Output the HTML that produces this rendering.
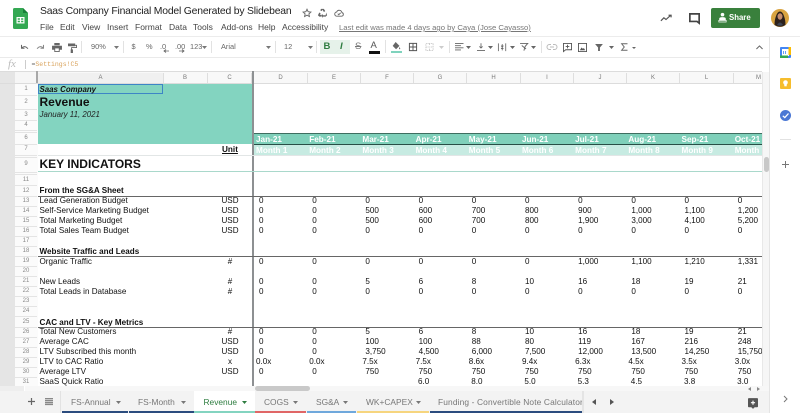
<!DOCTYPE html>
<html><head><meta charset="utf-8"><style>
html,body{margin:0;padding:0;background:#fff}
body{width:800px;height:413px;overflow:hidden;position:relative;font-family:"Liberation Sans",sans-serif;color:#111}
#p{position:absolute;left:0;top:0;width:800px;height:413px;overflow:hidden;filter:blur(.35px)}
.a{position:absolute;white-space:nowrap}
.b{position:absolute}
.rn{position:absolute;left:15px;width:22px;text-align:center;font-size:6px;color:#888;line-height:10px}
.rl{position:absolute;left:15px;width:22px;height:1px;background:#e4e4e4}
.ch{position:absolute;top:73px;height:10px;line-height:10px;text-align:center;font-size:6px;color:#777;border-right:1px solid #dedede}
.t{position:absolute;left:39.5px;font-size:8.1px;line-height:10px;margin-top:.4px;white-space:nowrap;color:#111}
.h{font-weight:bold;color:#111}
.u{position:absolute;left:208px;width:44px;text-align:center;font-size:8.1px;line-height:10px;margin-top:.4px;color:#111}
.v{position:absolute;left:259px;display:flex;font-size:8.1px;line-height:10px;margin-top:.4px;color:#111;white-space:nowrap}
.v span{display:block;width:53.2px;flex:none}
.hd{position:absolute;left:256px;display:flex;font-size:8.2px;font-weight:bold;color:#fff;line-height:11px;white-space:nowrap}
.hd span{display:block;width:53.2px;flex:none}
.menu{position:absolute;top:22px;font-size:8.5px;line-height:11px;color:#444}
.tool{position:absolute;top:42px;font-size:7.4px;line-height:10px;color:#666}
.tab{position:absolute;top:396px;font-size:8.4px;line-height:12px;color:#777;white-space:nowrap}
svg{position:absolute;overflow:visible}
</style></head><body><div id="p">

<!-- Title bar -->
<svg style="left:13px;top:8px" width="15" height="21" viewBox="0 0 15 21"><path d="M1.5 0H10L15 5V19.5Q15 21 13.5 21H1.5Q0 21 0 19.5V1.5Q0 0 1.5 0Z" fill="#34a853"/><path d="M10 0L15 5H10Z" fill="#188038"/><path d="M3.5 9H11.5V15.5H3.5ZM4.7 10.2V11.7H6.9V10.2ZM8.1 10.2V11.7H10.3V10.2ZM4.7 12.8V14.3H6.9V12.8ZM8.1 12.8V14.3H10.3V12.8Z" fill="#fff" fill-rule="evenodd"/></svg>
<div class="a" style="left:40px;top:4px;font-size:10.4px;letter-spacing:-.2px;line-height:16px;color:#222">Saas Company Financial Model Generated by Slidebean</div>
<svg style="left:301.5px;top:8px" width="10" height="10" viewBox="0 0 24 24"><path d="M12 3l2.800 6 6.500.7-4.800 4.400 1.300 6.400L12 17.300 6.200 20.500l1.300-6.400L2.700 9.700 9.200 9z" fill="none" stroke="#666" stroke-width="2.200"/></svg>
<svg style="left:317px;top:7px" width="11" height="11" viewBox="0 0 24 24"><path d="M9 4h6l3 5-3 2-3-5-2 3-3-2zM5 12l-3 6 3 3h5v-4H6l2-3zM20 12l2 6-3 3h-6v3l-3-5 3-4v3h6z" fill="#666"/></svg>
<svg style="left:334px;top:8.5px" width="10" height="8.5" viewBox="0 0 24 20"><path d="M7 17a5 5 0 0 1-.5-10A6.500 6.500 0 0 1 19 8.500 4.300 4.300 0 0 1 18.500 17zM9 11l2.500 2.500L16 9" fill="none" stroke="#666" stroke-width="2.200"/></svg>
<div class="menu" style="left:40px">File</div>
<div class="menu" style="left:60px">Edit</div>
<div class="menu" style="left:82px">View</div>
<div class="menu" style="left:107px">Insert</div>
<div class="menu" style="left:135px">Format</div>
<div class="menu" style="left:169px">Data</div>
<div class="menu" style="left:193px">Tools</div>
<div class="menu" style="left:221px">Add-ons</div>
<div class="menu" style="left:258px">Help</div>
<div class="menu" style="left:282px">Accessibility</div>
<div class="menu" style="left:339px;color:#777;text-decoration:underline;font-size:7.7px">Last edit was made 4 days ago by Caya (Jose Cayasso)</div>

<svg style="left:660px;top:14px" width="12" height="8.5" viewBox="0 0 14 10"><path d="M1 8L4.500 4.500 7 6.500 12 2M10 1.500H13V4" fill="none" stroke="#555" stroke-width="1.400"/></svg>
<svg style="left:688.5px;top:13px" width="11" height="11" viewBox="0 0 13 13"><path d="M1 1H12V12L9.500 10H1Z" fill="none" stroke="#444" stroke-width="2"/></svg>
<div class="b" style="left:711px;top:8px;width:49px;height:20px;background:#39803c;border-radius:2px"></div>
<svg style="left:718px;top:12px" width="9" height="11" viewBox="0 0 11 12"><circle cx="5.500" cy="2.500" r="2.200" fill="#fff"/><path d="M1.500 9V7.500Q1.500 5.500 5.500 5.500T9.500 7.500V9Z" fill="#fff"/><path d="M1 9.500H10V11.500H1Z" fill="none" stroke="#fff" stroke-width=".8"/></svg>
<div class="a" style="left:729px;top:12px;font-size:7.8px;line-height:12px;font-weight:bold;color:#fff">Share</div>
<svg style="left:771px;top:9px" width="18" height="18" viewBox="0 0 18 18"><circle cx="9" cy="9" r="9" fill="#d9a441"/><path d="M3.500 16Q3.500 11 5 7Q6.500 2.500 9 2.500T13 7Q14.500 11 14.500 16Q9 19.500 3.500 16Z" fill="#2c211c"/><ellipse cx="9" cy="7.500" rx="2.500" ry="3.200" fill="#c58d6e"/><path d="M6 16Q9 11 12 16Q9 17.500 6 16Z" fill="#3d4452"/></svg>

<div class="b" style="left:0;top:36px;width:800px;height:1px;background:#ececec"></div>

<!-- Toolbar -->
<svg style="left:20px;top:44px" width="9" height="6" viewBox="0 0 10 7"><path d="M1.500 1V5H5M1.800 4.800Q5 1 9 5.500" fill="none" stroke="#666" stroke-width="1.200"/></svg>
<svg style="left:36px;top:44px" width="9" height="6" viewBox="0 0 10 7"><path d="M8.500 1V5H5M8.200 4.800Q5 1 1 5.500" fill="none" stroke="#888" stroke-width="1.200"/></svg>
<svg style="left:51.5px;top:43px" width="10" height="9" viewBox="0 0 11 10"><path d="M2.500 0H8.500V2.500H2.500ZM0 3H11V7.500H8.500V10H2.500V7.500H0Z" fill="#666"/><path d="M3.500 6H7.500V9H3.500Z" fill="#fff"/></svg>
<svg style="left:68px;top:43px" width="9" height="10" viewBox="0 0 10 11"><path d="M0 .5H8V3.500H0ZM8 2H10V5.500H4.500V7H5.500V11H3V7H3.500V4.500H9V3H8Z" fill="#666"/></svg>
<div class="b" style="left:81px;top:41px;width:1px;height:12px;background:#e2e2e2"></div>
<div class="tool" style="left:91px">90%</div>
<svg style="left:114px;top:46px" width="5" height="3"><path d="M0 0H5L2.500 3Z" fill="#777"/></svg>
<div class="b" style="left:123px;top:41px;width:1px;height:12px;background:#e2e2e2"></div>
<div class="tool" style="left:131.5px">$</div>
<div class="tool" style="left:146px">%</div>
<div class="tool" style="left:160px">.0</div>
<svg style="left:163px;top:49px" width="6" height="4"><path d="M6 2H1M3 .5L1 2 3 3.500" fill="none" stroke="#666" stroke-width=".8"/></svg>
<div class="tool" style="left:175px">.00</div>
<svg style="left:179px;top:49px" width="6" height="4"><path d="M0 2H5M3 .5L5 2 3 3.500" fill="none" stroke="#666" stroke-width=".8"/></svg>
<div class="tool" style="left:190px">123</div>
<svg style="left:202px;top:46px" width="5" height="3"><path d="M0 0H5L2.500 3Z" fill="#777"/></svg>
<div class="b" style="left:211px;top:41px;width:1px;height:12px;background:#e2e2e2"></div>
<div class="tool" style="left:221px">Arial</div>
<svg style="left:266px;top:46px" width="5" height="3"><path d="M0 0H5L2.500 3Z" fill="#777"/></svg>
<div class="b" style="left:275px;top:41px;width:1px;height:12px;background:#e2e2e2"></div>
<div class="tool" style="left:284px">12</div>
<svg style="left:308px;top:46px" width="5" height="3"><path d="M0 0H5L2.500 3Z" fill="#777"/></svg>
<div class="b" style="left:316px;top:41px;width:1px;height:12px;background:#e2e2e2"></div>
<div class="b" style="left:320px;top:40px;width:30px;height:14px;background:#e6f2ea"></div>
<div class="a" style="left:323.5px;top:41px;font-size:9.5px;line-height:12px;font-weight:bold;color:#2e7d40">B</div>
<div class="a" style="left:340px;top:41px;font-size:9.5px;line-height:12px;font-style:italic;font-weight:bold;color:#2e7d40">I</div>
<div class="a" style="left:355px;top:41px;font-size:9.5px;line-height:12px;color:#777;text-decoration:line-through">S</div>
<div class="a" style="left:370.5px;top:40px;font-size:9.5px;line-height:12px;color:#555">A</div>
<div class="b" style="left:369px;top:51px;width:11px;height:2.5px;background:#111"></div>
<div class="b" style="left:385px;top:40px;width:1px;height:13px;background:#e2e2e2"></div>
<svg style="left:391.5px;top:42px" width="9" height="8.5" viewBox="0 0 10 10"><path d="M4 0L8.500 4.500 4.500 8.500 .5 4.500Z" fill="#666"/><path d="M8.500 6Q10 8 9 8.500T8 7Z" fill="#666"/></svg>
<div class="b" style="left:391px;top:51px;width:11px;height:2px;background:#7fd3bd"></div>
<svg style="left:409px;top:43px" width="8" height="8" viewBox="0 0 10 10"><path d="M.5.500H9.500V9.500H.5ZM5 .5V9.500M.5 5H9.500" fill="none" stroke="#555" stroke-width="1.200"/></svg>
<svg style="left:425px;top:43px" width="9" height="8" viewBox="0 0 10 10"><path d="M.5.500H9.500V9.500H.5ZM.5 5H9.500M5 .5V3M5 7V9.500" fill="none" stroke="#c4c4c4" stroke-width="1" stroke-dasharray="2 1"/></svg>
<svg style="left:439px;top:46px" width="5" height="3"><path d="M0 0H5L2.500 3Z" fill="#ccc"/></svg>
<div class="b" style="left:449px;top:41px;width:1px;height:12px;background:#e2e2e2"></div>
<svg style="left:455px;top:43px" width="8.5" height="8" viewBox="0 0 10 9"><path d="M0 .5H10M0 3H7M0 5.500H10M0 8H7" stroke="#666" stroke-width="1"/></svg>
<svg style="left:466px;top:46px" width="5" height="3"><path d="M0 0H5L2.500 3Z" fill="#666"/></svg>
<svg style="left:477px;top:43px" width="8" height="8.5" viewBox="0 0 10 10"><path d="M5 0V6M3 4L5 6 7 4M0 9H10" fill="none" stroke="#666" stroke-width="1.100"/></svg>
<svg style="left:488px;top:46px" width="5" height="3"><path d="M0 0H5L2.500 3Z" fill="#666"/></svg>
<svg style="left:498px;top:43px" width="8.5" height="8.5" viewBox="0 0 11 10"><path d="M.5 0V10M10 0V10M5.500 1V4M5.500 6V9M4 3L5.500 4.500 7 3M4 7L5.500 5.500 7 7" fill="none" stroke="#666" stroke-width="1.100"/></svg>
<svg style="left:510px;top:46px" width="5" height="3"><path d="M0 0H5L2.500 3Z" fill="#666"/></svg>
<svg style="left:520px;top:43px" width="9.5" height="8.5" viewBox="0 0 11 10"><path d="M0 .5H9L6 4 4.500 9M2 3L7 7" fill="none" stroke="#666" stroke-width="1.100"/></svg>
<svg style="left:531px;top:46px" width="5" height="3"><path d="M0 0H5L2.500 3Z" fill="#666"/></svg>
<div class="b" style="left:541px;top:41px;width:1px;height:12px;background:#e2e2e2"></div>
<svg style="left:547px;top:44px" width="10" height="6" viewBox="0 0 10 6"><path d="M4 .5H2.500A2.500 2.500 0 0 0 2.500 5.500H4M6 .5H7.500A2.500 2.500 0 0 1 7.500 5.500H6M3 3H7" fill="none" stroke="#bbb" stroke-width="1"/></svg>
<svg style="left:563px;top:43px" width="9" height="9" viewBox="0 0 10 10"><path d="M.5.500H9.500V7.500H3L.5 9.500ZM5 2V6M3 4H7" fill="none" stroke="#555" stroke-width="1"/></svg>
<svg style="left:578px;top:43px" width="9" height="9" viewBox="0 0 10 10"><path d="M.5.500H9.500V9.500H.5Z" fill="none" stroke="#555" stroke-width="1"/><path d="M2 8L4 5 5.500 6.500 6.500 5.500 8 8Z" fill="#555"/></svg>
<svg style="left:595px;top:44px" width="8" height="7" viewBox="0 0 10 9"><path d="M0 0H10L6.200 4.500V9H3.800V4.500Z" fill="#666"/></svg>
<svg style="left:609px;top:46px" width="5" height="3"><path d="M0 0H5L2.500 3Z" fill="#666"/></svg>
<svg style="left:621px;top:43px" width="6.5" height="8" viewBox="0 0 8 9"><path d="M8 .5H.8L4 4.500.8 8.500H8" fill="none" stroke="#666" stroke-width="1.200"/></svg>
<svg style="left:632px;top:47px" width="4" height="2"><path d="M0 0H4L2 2Z" fill="#666"/></svg>
<svg style="left:755.5px;top:45px" width="7" height="4.5" viewBox="0 0 8 5"><path d="M.5 4.500L4 1 7.500 4.500" fill="none" stroke="#666" stroke-width="1.200"/></svg>

<div class="b" style="left:0;top:57px;width:769px;height:1px;background:#eaeaea"></div>

<!-- Formula bar -->
<div class="a" style="left:8px;top:58px;font-family:'Liberation Serif',serif;font-style:italic;font-size:11px;line-height:13px;color:#bbb">fx</div>
<div class="b" style="left:25px;top:60px;width:1px;height:9px;background:#ccc"></div>
<div class="a" style="left:31.5px;top:59px;font-family:'Liberation Mono',monospace;font-size:6.5px;line-height:11px;color:#d9a35c"><span style="color:#666">=</span>Settings!C5</div>

<!-- Sheet area -->
<div class="b" style="left:0;top:71px;width:15px;height:315px;background:#e5e5e5"></div>
<div class="b" style="left:0;top:71px;width:762px;height:1px;background:#dcdcdc"></div>
<div class="b" style="left:15px;top:72px;width:21px;height:11px;background:#f6f6f6"></div>
<div class="b" style="left:36px;top:71px;width:2px;height:12px;background:#a8a8a8"></div>
<div class="b" style="left:38px;top:72px;width:724px;height:11px;background:#f8f8f8"></div>
<div class="b" style="left:0;top:83px;width:762px;height:1px;background:#dcdcdc"></div>

<div class="ch" style="left:38px;width:125px;background:#f0f0f0">A</div>
<div class="ch" style="left:163px;width:44px">B</div>
<div class="ch" style="left:208px;width:43px">C</div>
<div class="ch" style="left:254px;width:53px">D</div>
<div class="ch" style="left:308px;width:52px">E</div>
<div class="ch" style="left:361px;width:52px">F</div>
<div class="ch" style="left:414px;width:52px">G</div>
<div class="ch" style="left:467px;width:53px">H</div>
<div class="ch" style="left:521px;width:52px">I</div>
<div class="ch" style="left:574px;width:52px">J</div>
<div class="ch" style="left:627px;width:52px">K</div>
<div class="ch" style="left:680px;width:53px">L</div>
<div class="a" style="left:756px;top:73px;font-size:6px;line-height:10px;color:#777">M</div>

<!-- row header column -->
<div class="b" style="left:15px;top:84px;width:23px;height:302px;background:#fbfbfb"></div>
<div class="rn" style="top:84px">1</div><div class="rn" style="top:97px">2</div><div class="rn" style="top:110px">3</div><div class="rn" style="top:120px">4</div><div class="rn" style="top:133px">6</div><div class="rn" style="top:144px">7</div><div class="rn" style="top:159px">9</div><div class="rn" style="top:175px">11</div><div class="rn" style="top:186px">12</div><div class="rn" style="top:196px">13</div><div class="rn" style="top:206px">14</div><div class="rn" style="top:216px">15</div><div class="rn" style="top:226px">16</div><div class="rn" style="top:236px">17</div><div class="rn" style="top:246px">18</div><div class="rn" style="top:256px">19</div><div class="rn" style="top:266px">20</div><div class="rn" style="top:276px">21</div><div class="rn" style="top:286px">22</div><div class="rn" style="top:296px">23</div><div class="rn" style="top:306px">24</div><div class="rn" style="top:317px">25</div><div class="rn" style="top:327px">26</div><div class="rn" style="top:337px">27</div><div class="rn" style="top:347px">28</div><div class="rn" style="top:357px">29</div><div class="rn" style="top:367px">30</div><div class="rn" style="top:377px">31</div>
<div class="rl" style="top:95px"></div><div class="rl" style="top:109px"></div><div class="rl" style="top:120px"></div><div class="rl" style="top:130px"></div><div class="rl" style="top:132px"></div><div class="rl" style="top:144px"></div><div class="rl" style="top:155px"></div><div class="rl" style="top:157px"></div><div class="rl" style="top:172px"></div><div class="rl" style="top:174px"></div><div class="rl" style="top:185px"></div><div class="rl" style="top:196px"></div><div class="rl" style="top:206px"></div><div class="rl" style="top:216px"></div><div class="rl" style="top:226px"></div><div class="rl" style="top:236px"></div><div class="rl" style="top:246px"></div><div class="rl" style="top:256px"></div><div class="rl" style="top:266px"></div><div class="rl" style="top:276px"></div><div class="rl" style="top:286px"></div><div class="rl" style="top:296px"></div><div class="rl" style="top:306px"></div><div class="rl" style="top:316px"></div><div class="rl" style="top:327px"></div><div class="rl" style="top:337px"></div><div class="rl" style="top:347px"></div><div class="rl" style="top:357px"></div><div class="rl" style="top:367px"></div><div class="rl" style="top:377px"></div>

<!-- teal header block -->
<div class="b" style="left:38px;top:84px;width:214px;height:60px;background:#83d4c0"></div>
<div class="b" style="left:38px;top:83.5px;width:125px;height:10.5px;border:1px solid #3d85c6;box-sizing:border-box"></div>
<div class="a" style="left:39.5px;top:85px;font-size:7.9px;line-height:10px;font-weight:bold;font-style:italic;color:#111">Saas Company</div>
<div class="a" style="left:39.5px;top:94.5px;font-size:12px;line-height:15px;font-weight:bold;color:#111">Revenue</div>
<div class="a" style="left:39.5px;top:110px;font-size:7.9px;line-height:10px;font-style:italic;color:#222">January 11, 2021</div>
<div class="a" style="left:222px;top:144px;font-size:8.2px;line-height:11px;font-weight:bold;text-decoration:underline;color:#111">Unit</div>
<div class="a" style="left:39.5px;top:156px;font-size:12px;line-height:16px;font-weight:bold;color:#111">KEY INDICATORS</div>

<!-- Frozen divider -->
<div class="b" style="left:251.5px;top:71px;width:2px;height:315px;background:#8d9092"></div>

<!-- Month bands -->
<div class="b" style="left:254px;top:133px;width:508px;height:12px;background:#7fd0ba;border-top:1px solid #3e6e60;border-bottom:1px solid #284f46;box-sizing:border-box"></div>
<div class="b" style="left:254px;top:145px;width:508px;height:10px;background:#c7ebe2"></div>
<div class="hd" style="top:134px"><span>Jan-21</span><span>Feb-21</span><span>Mar-21</span><span>Apr-21</span><span>May-21</span><span>Jun-21</span><span>Jul-21</span><span>Aug-21</span><span>Sep-21</span><span>Oct-21</span></div>
<div class="hd" style="top:145px"><span>Month 1</span><span>Month 2</span><span>Month 3</span><span>Month 4</span><span>Month 5</span><span>Month 6</span><span>Month 7</span><span>Month 8</span><span>Month 9</span><span>Month 10</span></div>
<div class="b" style="left:38px;top:155px;width:724px;height:1px;background:#e2e6e6"></div>
<div class="b" style="left:38px;top:171px;width:724px;height:1px;background:#a9d8cb"></div>
<div class="b" style="left:38px;top:196px;width:724px;height:1px;background:#666"></div>
<div class="b" style="left:38px;top:256px;width:724px;height:1px;background:#666"></div>
<div class="b" style="left:38px;top:327px;width:724px;height:1px;background:#666"></div>

<!-- Labels -->
<div class="t h" style="top:186px">From the SG&amp;A Sheet</div>
<div class="t" style="top:196px">Lead Generation Budget</div><div class="u" style="top:196px">USD</div>
<div class="t" style="top:206px">Self-Service Marketing Budget</div><div class="u" style="top:206px">USD</div>
<div class="t" style="top:216px">Total Marketing Budget</div><div class="u" style="top:216px">USD</div>
<div class="t" style="top:226px">Total Sales Team Budget</div><div class="u" style="top:226px">USD</div>
<div class="t h" style="top:247px">Website Traffic and Leads</div>
<div class="t" style="top:257px">Organic Traffic</div><div class="u" style="top:257px">#</div>
<div class="t" style="top:277px">New Leads</div><div class="u" style="top:277px">#</div>
<div class="t" style="top:287px">Total Leads in Database</div><div class="u" style="top:287px">#</div>
<div class="t h" style="top:318px">CAC and LTV - Key Metrics</div>
<div class="t" style="top:327px">Total New Customers</div><div class="u" style="top:327px">#</div>
<div class="t" style="top:337px">Average CAC</div><div class="u" style="top:337px">USD</div>
<div class="t" style="top:347px">LTV Subscribed this month</div><div class="u" style="top:347px">USD</div>
<div class="t" style="top:357px">LTV to CAC Ratio</div><div class="u" style="top:357px">x</div>
<div class="t" style="top:367px">Average LTV</div><div class="u" style="top:367px">USD</div>
<div class="t" style="top:377px">SaaS Quick Ratio</div>

<!-- Values -->
<div class="v" style="top:196px"><span>0</span><span>0</span><span>0</span><span>0</span><span>0</span><span>0</span><span>0</span><span>0</span><span>0</span><span>0</span></div>
<div class="v" style="top:206px"><span>0</span><span>0</span><span>500</span><span>600</span><span>700</span><span>800</span><span>900</span><span>1,000</span><span>1,100</span><span>1,200</span></div>
<div class="v" style="top:216px"><span>0</span><span>0</span><span>500</span><span>600</span><span>700</span><span>800</span><span>1,900</span><span>3,000</span><span>4,100</span><span>5,200</span></div>
<div class="v" style="top:226px"><span>0</span><span>0</span><span>0</span><span>0</span><span>0</span><span>0</span><span>0</span><span>0</span><span>0</span><span>0</span></div>
<div class="v" style="top:257px"><span>0</span><span>0</span><span>0</span><span>0</span><span>0</span><span>0</span><span>1,000</span><span>1,100</span><span>1,210</span><span>1,331</span></div>
<div class="v" style="top:277px"><span>0</span><span>0</span><span>5</span><span>6</span><span>8</span><span>10</span><span>16</span><span>18</span><span>19</span><span>21</span></div>
<div class="v" style="top:287px"><span>0</span><span>0</span><span>0</span><span>0</span><span>0</span><span>0</span><span>0</span><span>0</span><span>0</span><span>0</span></div>
<div class="v" style="top:327px"><span>0</span><span>0</span><span>5</span><span>6</span><span>8</span><span>10</span><span>16</span><span>18</span><span>19</span><span>21</span></div>
<div class="v" style="top:337px"><span>0</span><span>0</span><span>100</span><span>100</span><span>88</span><span>80</span><span>119</span><span>167</span><span>216</span><span>248</span></div>
<div class="v" style="top:347px"><span>0</span><span>0</span><span>3,750</span><span>4,500</span><span>6,000</span><span>7,500</span><span>12,000</span><span>13,500</span><span>14,250</span><span>15,750</span></div>
<div class="v" style="top:357px;left:256px"><span>0.0x</span><span>0.0x</span><span>7.5x</span><span>7.5x</span><span>8.6x</span><span>9.4x</span><span>6.3x</span><span>4.5x</span><span>3.5x</span><span>3.0x</span></div>
<div class="v" style="top:367px"><span>0</span><span>0</span><span>750</span><span>750</span><span>750</span><span>750</span><span>750</span><span>750</span><span>750</span><span>750</span></div>
<div class="v" style="top:377px;left:418px"><span>6.0</span><span>8.0</span><span>5.0</span><span>5.3</span><span>4.5</span><span>3.8</span><span>3.0</span></div>

<!-- Scrollbar -->
<div class="b" style="left:762px;top:72px;width:7px;height:314px;background:#f6f6f6;border-left:1px solid #e8e8e8;box-sizing:border-box"></div>
<div class="b" style="left:763.5px;top:157px;width:5px;height:15px;background:#c8c8c8;border-radius:3px"></div>

<!-- Right sidebar -->
<div class="b" style="left:769px;top:37px;width:1px;height:376px;background:#e4e4e4"></div>
<svg style="left:780px;top:47px" width="11" height="11" viewBox="0 0 11 11"><rect width="11" height="11" rx="1" fill="#4285f4"/><rect x="2" y="2" width="7" height="7" fill="#fff"/><rect x="8.500" y="0" width="2.500" height="8" fill="#fbbc04"/><rect x="0" y="8.500" width="8" height="2.500" fill="#34a853"/><path d="M3.500 4V7M5.500 4V7" stroke="#4285f4" stroke-width=".8"/></svg>
<svg style="left:780px;top:78px" width="11" height="11" viewBox="0 0 11 11"><rect width="11" height="11" rx="1" fill="#f6bd2d"/><circle cx="5.500" cy="4.500" r="2.300" fill="#fff"/><rect x="4.300" y="6.500" width="2.400" height="1.800" fill="#fff"/></svg>
<svg style="left:780px;top:110px" width="11" height="11" viewBox="0 0 11 11"><circle cx="5.500" cy="5.500" r="5.500" fill="#4a77d4"/><path d="M2.800 5.800L4.800 7.600 8.500 3.500" fill="none" stroke="#fff" stroke-width="1.300"/></svg>
<div class="b" style="left:780px;top:139px;width:11px;height:1px;background:#e2e2e2"></div>
<svg style="left:782px;top:161px" width="7" height="7"><path d="M3.500 0V7M0 3.500H7" stroke="#777" stroke-width="1"/></svg>
<svg style="left:783px;top:394.5px" width="5" height="8"><path d="M1 1L4 4 1 7" fill="none" stroke="#777" stroke-width="1"/></svg>

<!-- Bottom bar -->
<div class="b" style="left:0;top:386px;width:24px;height:5px;background:#eee"></div>
<div class="b" style="left:25px;top:386px;width:744px;height:5px;background:#f7f7f7"></div>
<div class="b" style="left:255px;top:386px;width:55px;height:4.5px;background:#c9c9c9;border-radius:3px"></div>
<svg style="left:748px;top:386.5px" width="3" height="4"><path d="M3 0V4L0 2Z" fill="#888"/></svg>
<svg style="left:757px;top:386.5px" width="3" height="4"><path d="M0 0V4L3 2Z" fill="#888"/></svg>
<div class="b" style="left:0;top:391px;width:769px;height:22px;background:#f3f3f3"></div>
<svg style="left:28px;top:398px" width="7" height="7"><path d="M3.500 0V7M0 3.500H7" stroke="#666" stroke-width="1.200"/></svg>
<svg style="left:45px;top:398px" width="8" height="7"><path d="M0 .7H8M0 2.700H8M0 4.700H8M0 6.500H8" stroke="#888" stroke-width="1.300"/></svg>
<div class="b" style="left:60px;top:391px;width:1px;height:22px;background:#e2e2e2"></div>
<div class="b" style="left:194px;top:391px;width:61px;height:20px;background:#fff"></div>
<div class="tab" style="left:71px">FS-Annual</div><svg style="left:116px;top:401px" width="5" height="3"><path d="M0 0H5L2.500 3Z" fill="#777"/></svg>
<div class="tab" style="left:138px">FS-Month</div><svg style="left:181px;top:401px" width="5" height="3"><path d="M0 0H5L2.500 3Z" fill="#777"/></svg>
<div class="tab" style="left:203.5px;color:#2e7d40">Revenue</div><svg style="left:242px;top:401px" width="5" height="3"><path d="M0 0H5L2.500 3Z" fill="#2e7d40"/></svg>
<div class="tab" style="left:264px">COGS</div><svg style="left:293px;top:401px" width="5" height="3"><path d="M0 0H5L2.500 3Z" fill="#777"/></svg>
<div class="tab" style="left:316px">SG&amp;A</div><svg style="left:343px;top:401px" width="5" height="3"><path d="M0 0H5L2.500 3Z" fill="#777"/></svg>
<div class="tab" style="left:366px">WK+CAPEX</div><svg style="left:416px;top:401px" width="5" height="3"><path d="M0 0H5L2.500 3Z" fill="#777"/></svg>
<div class="tab" style="left:438px;width:145px;overflow:hidden;letter-spacing:.13px">Funding - Convertible Note Calculator</div>
<div class="b" style="left:582px;top:391px;width:2px;height:22px;background:#e4e4e4"></div>
<svg style="left:591.5px;top:399px" width="4" height="6"><path d="M4 0V6L0 3Z" fill="#555"/></svg>
<svg style="left:609.5px;top:399px" width="4" height="6"><path d="M0 0V6L4 3Z" fill="#555"/></svg>
<svg style="left:748px;top:397.5px" width="10" height="11" viewBox="0 0 12 13"><path d="M0 1Q0 0 1 0H11Q12 0 12 1V10Q12 11 11 11H8L6 13 4 11H1Q0 11 0 10Z" fill="#555"/><path d="M6 3V8M3.500 5.500H8.500" stroke="#fff" stroke-width="1.400"/></svg>
<div class="b" style="left:61.5px;top:411px;width:66.5px;height:2px;background:#2b4c7e"></div>
<div class="b" style="left:129px;top:411px;width:64.5px;height:2px;background:#2b4c7e"></div>
<div class="b" style="left:194px;top:411px;width:61px;height:2px;background:#83d4c0"></div>
<div class="b" style="left:255px;top:411px;width:51px;height:2px;background:#e06666"></div>
<div class="b" style="left:307px;top:411px;width:49px;height:2px;background:#6fa8dc"></div>
<div class="b" style="left:357px;top:411px;width:71.5px;height:2px;background:#f6d57e"></div>
<div class="b" style="left:430px;top:411px;width:152px;height:2px;background:#2b4c7e"></div>

</div></body></html>
